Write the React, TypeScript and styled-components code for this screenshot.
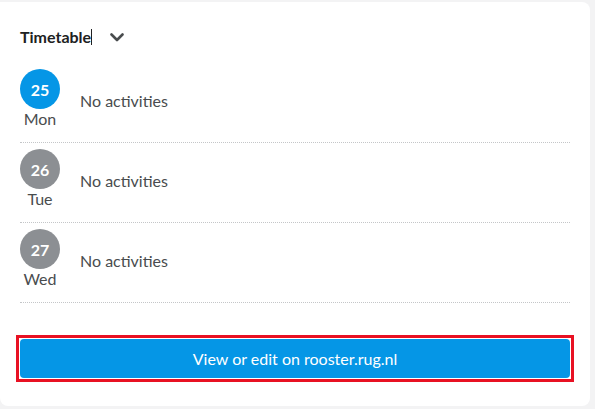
import styled, { createGlobalStyle } from 'styled-components'

type DayItem = {
  date: number
  weekday: string
  today: boolean
}

const days: DayItem[] = [
  { date: 25, weekday: 'Mon', today: true },
  { date: 26, weekday: 'Tue', today: false },
  { date: 27, weekday: 'Wed', today: false },
]

const GlobalStyle = createGlobalStyle`
  body {
    margin: 0;
    background: #f3f3f4;
    font-family: Lato, 'Open Sans', sans-serif;
    color: #494c4e;
  }
`

const App = () => {
  return (
    <>
      <GlobalStyle />
      <Card>
        <Header>
          <Title>Timetable</Title>
          <Caret />
          <Chevron width="14" height="9" viewBox="0 0 14 9">
            <path
              d="M1.5 1.5 L7 7 L12.5 1.5"
              fill="none"
              stroke="#494c4e"
              strokeWidth="2.6"
              strokeLinecap="round"
              strokeLinejoin="round"
            />
          </Chevron>
        </Header>

        <DayList>
          {days.map((day) => (
            <DayRow key={day.date}>
              <DateBlock>
                <DateCircle today={day.today}>{day.date}</DateCircle>
                <Weekday>{day.weekday}</Weekday>
              </DateBlock>
              <Activities>No activities</Activities>
            </DayRow>
          ))}
        </DayList>

        <FocusRing>
          <ViewButton type="button">View or edit on rooster.rug.nl</ViewButton>
        </FocusRing>
      </Card>
    </>
  )
}

const Card = styled.div`
  margin: 2px 5px 3px 0;
  height: 404px;
  box-sizing: border-box;
  background: #ffffff;
  border-radius: 0 8px 8px 8px;
  padding: 25px 20px 0 20px;
  display: flex;
  flex-direction: column;
`

const Header = styled.div`
  display: flex;
  align-items: center;
  height: 20px;
`

const Title = styled.h2`
  margin: 0;
  font-size: 16px;
  font-weight: 700;
  color: #202122;
  line-height: 20px;
`

const Caret = styled.span`
  display: inline-block;
  width: 1px;
  height: 16px;
  background: #202122;
`

const Chevron = styled.svg`
  margin-left: 18px;
  margin-top: 1px;
`

const DayList = styled.ul`
  list-style: none;
  margin: 16px 0 0 0;
  padding: 0;
`

const DayRow = styled.li`
  display: flex;
  align-items: center;
  gap: 20px;
  padding: 6px 0 13px 0;
  border-bottom: 1px dotted #c4c6c8;
`

const DateBlock = styled.div`
  display: flex;
  flex-direction: column;
  align-items: center;
  width: 40px;
`

const DateCircle = styled.div<{ today: boolean }>`
  width: 40px;
  height: 40px;
  border-radius: 50%;
  background: ${({ today }) => (today ? '#0596e6' : '#8c8f93')};
  color: #ffffff;
  font-size: 16px;
  font-weight: 700;
  display: flex;
  align-items: center;
  justify-content: center;
`

const Weekday = styled.span`
  font-size: 16px;
  line-height: 20px;
  color: #494c4e;
`

const Activities = styled.span`
  font-size: 16px;
  color: #494c4e;
  margin-top: 2px;
`

const FocusRing = styled.div`
  margin: 32px -4px 0 -4px;
  border: 3px solid #e81123;
  padding: 1px;
`

const ViewButton = styled.button`
  display: block;
  width: 100%;
  height: 39px;
  border: none;
  border-radius: 4px;
  background: #0596e6;
  color: #ffffff;
  font-family: Lato, 'Open Sans', sans-serif;
  font-size: 16px;
  cursor: pointer;
  outline: none;
`

export default App
